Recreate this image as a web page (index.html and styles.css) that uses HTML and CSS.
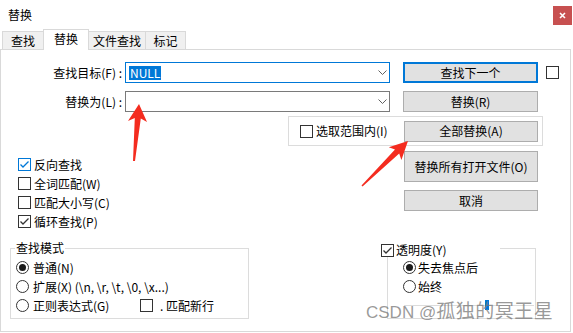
FILE: index.html
```html
<!DOCTYPE html>
<html>
<head>
<meta charset="utf-8">
<title>替换</title>
<link rel="stylesheet" href="styles.css">
</head>
<body>
	<div class="titlebar">
		<span class="title">替换</span>
		<span class="close"><svg width="7" height="7" viewBox="0 0 7 7"><path d="M1 1 L6 6 M6 1 L1 6" stroke="#fff" stroke-width="1.6"/></svg></span>
	</div>

	<div class="tabs">
		<span class="tab t1">查找</span>
		<span class="tab active">替换</span>
		<span class="tab t3">文件查找</span>
		<span class="tab t4">标记</span>
	</div>

	<div class="panel">
		<div class="row row-find">
			<span class="label">查找目标(F) :</span>
			<div class="combo focus"><span class="sel">NULL</span><svg class="chev" width="9" height="5" viewBox="0 0 9 5"><path d="M0.5 0.5 L4.5 4.5 L8.5 0.5" fill="none" stroke="#606060"/></svg></div>
			<div class="btn default">查找下一个</div>
			<span class="box"></span>
		</div>

		<div class="row row-replace">
			<span class="label">替换为(L) :</span>
			<div class="combo"><span></span><svg class="chev" width="9" height="5" viewBox="0 0 9 5"><path d="M0.5 0.5 L4.5 4.5 L8.5 0.5" fill="none" stroke="#606060"/></svg></div>
			<div class="btn">替换(R)</div>
		</div>

		<div class="scope">
			<span class="box"></span><span class="scope-label">选取范围内(I)</span>
			<div class="btn">全部替换(A)</div>
		</div>

		<div class="middle">
			<div class="checks">
				<div class="check"><span class="box blue"><svg width="11" height="11" viewBox="0 0 11 11"><path d="M1.5 5.5 L4 8 L9.5 2.5" fill="none" stroke="currentColor" stroke-width="1.3"/></svg></span>反向查找</div>
				<div class="check"><span class="box"></span>全词匹配(W)</div>
				<div class="check"><span class="box"></span>匹配大小写(C)</div>
				<div class="check"><span class="box"><svg width="11" height="11" viewBox="0 0 11 11"><path d="M1.5 5.5 L4 8 L9.5 2.5" fill="none" stroke="currentColor" stroke-width="1.3"/></svg></span>循环查找(P)</div>
			</div>
			<div class="buttons">
				<div class="btn tall">替换所有打开文件(O)</div>
				<div class="btn">取消</div>
			</div>
		</div>

		<div class="bottom">
			<div class="group mode">
				<div class="legend">查找模式</div>
				<div class="opt"><span class="radio on"></span>普通(N)</div>
				<div class="opt"><span class="radio"></span>扩展(X) (\n, \r, \t, \0, \x...)</div>
				<div class="opt"><span class="radio"></span><span class="re">正则表达式(G)</span><span class="box"></span><span class="nl">. 匹配新行</span></div>
			</div>
			<div class="group trans">
				<div class="legend"><span class="box"><svg width="11" height="11" viewBox="0 0 11 11"><path d="M1.5 5.5 L4 8 L9.5 2.5" fill="none" stroke="currentColor" stroke-width="1.3"/></svg></span>透明度(Y)</div>
				<div class="opt"><span class="radio on"></span>失去焦点后</div>
				<div class="opt"><span class="radio"></span>始终</div>
				<div class="slider"><span class="thumb"></span></div>
			</div>
		</div>
	</div>

	<div class="watermark">CSDN @<span class="wm-cjk">孤独的冥王星</span></div>

	<!-- red callout arrows drawn over the dialog -->
	<svg class="arrows" width="573" height="333" viewBox="0 0 573 333">
		<polygon points="139,104 147,122 140.8,118.5 135,161 133,161 134.8,118 128,121" fill="#f42c1f"/>
		<polygon points="408,141 388.8,147.2 395,149.4 361.5,185.5 362.5,186.5 399.2,153.6 401.4,160" fill="#f42c1f"/>
	</svg>
</body>
</html>
```

FILE: styles.css
```css
* {
	box-sizing: border-box;
}
html, body {
	margin: 0;
}
body {
	position: relative;
	width: 573px;
	height: 333px;
	overflow: hidden;
	background: #fff;
	color: #000;
	font: 12px/14px "Noto Sans CJK SC", "Liberation Sans", sans-serif;
}

.titlebar {
	display: flex;
	justify-content: space-between;
	height: 29px;
}
.title {
	padding: 7px 0 0 8px;
	line-height: 15px;
}
.close {
	display: flex;
	align-items: center;
	justify-content: center;
	width: 19px;
	height: 19px;
	margin: 6px 1px 0 0;
	background: #c75050;
}

.tabs {
	display: flex;
	align-items: flex-end;
	height: 20px;
	padding-left: 2px;
}
.tab {
	height: 18px;
	line-height: 17px;
	text-align: center;
	background: #f0f0f0;
	border: 1px solid #d9d9d9;
	border-bottom: 0;
}
.tab + .tab {
	margin-left: -1px;
}
.t1 { width: 42px; }
.t3 { width: 58px; }
.t4 { width: 41px; }
.tab.active {
	position: relative;
	z-index: 1;
	width: 46px;
	height: 21px;
	margin-bottom: -1px;
	line-height: 18px;
	background: #fff;
}

.panel {
	width: 571px;
	height: 283px;
	border: 1px solid #d9d9d9;
}

.row {
	display: flex;
	align-items: center;
	height: 21px;
}
.row-find {
	margin-top: 12px;
}
.row-replace {
	margin-top: 8px;
}
.label {
	width: 121px;
	text-align: right;
}
.combo {
	display: flex;
	align-items: center;
	justify-content: space-between;
	width: 265px;
	height: 21px;
	margin-left: 3px;
	padding: 0 2px 0 3px;
	background: #fff;
	border: 1px solid #7a7a7a;
}
.combo.focus {
	border-color: #0078d7;
}
.sel {
	padding: 0 1px;
	line-height: 14px;
	color: #fff;
	background: #0078d7;
}

.btn {
	display: flex;
	align-items: center;
	justify-content: center;
	width: 135px;
	height: 21px;
	background: #e1e1e1;
	border: 1px solid #adadad;
}
.row .btn {
	margin-left: 13px;
}
.btn.default {
	border: 2px solid #0078d7;
}
.row .box {
	margin-left: 8px;
}

.box {
	display: inline-flex;
	align-items: center;
	justify-content: center;
	flex: none;
	width: 13px;
	height: 13px;
	background: #fff;
	border: 1px solid #333;
	color: #333;
}
.box.blue {
	border-color: #0078d7;
	color: #0078d7;
}
.radio {
	display: inline-flex;
	align-items: center;
	justify-content: center;
	flex: none;
	width: 13px;
	height: 13px;
	border: 1px solid #333;
	border-radius: 50%;
	background: #fff;
}
.radio.on::after {
	content: "";
	width: 7px;
	height: 7px;
	border-radius: 50%;
	background: #1a1a1a;
}

.scope {
	display: flex;
	align-items: center;
	width: 255px;
	height: 30px;
	margin: 4px 0 0 287px;
	padding-left: 11px;
	border: 1px solid #dcdcdc;
}
.scope-label {
	margin-left: 3px;
}
.scope .btn {
	width: 134px;
	margin-left: auto;
	margin-right: 4px;
}

.middle {
	display: flex;
	justify-content: space-between;
	margin-top: 5px;
}
.checks {
	margin-left: 17px;
	padding-top: 4px;
}
.check {
	display: flex;
	align-items: center;
	gap: 3px;
	height: 19px;
}
.buttons {
	display: flex;
	flex-direction: column;
	gap: 8px;
	margin-right: 32px;
}
.buttons .btn {
	width: 134px;
}
.btn.tall {
	height: 31px;
}

.bottom {
	display: flex;
	align-items: flex-start;
	margin-top: 17px;
}
.group {
	height: 71px;
	border: 1px solid #dcdcdc;
}
.legend {
	width: max-content;
	margin: -8px 0 0 2px;
	padding: 0 1px;
	line-height: 14px;
	background: #fff;
}
.mode {
	width: 239px;
	margin-left: 9px;
	padding: 0 0 0 2px;
}
.mode .legend {
	margin-bottom: 3px;
}
.opt {
	display: flex;
	align-items: center;
	gap: 4px;
	height: 19px;
}
.mode .opt {
	margin-left: 3px;
}
.re {
	width: 103px;
}
.nl {
	margin-left: 3px;
}
.trans {
	width: 149px;
	margin-left: 138px;
}
.trans .legend {
	display: flex;
	align-items: center;
	gap: 2px;
	width: 119px;
	margin: -6px 0 1px -7px;
	padding: 0;
}
.trans .opt {
	margin-left: 15px;
	gap: 2px;
}
.slider {
	display: flex;
	width: 130px;
	height: 10px;
	margin: 4px 0 0 16px;
	background: linear-gradient(#dcdcdc, #dcdcdc) center / 100% 1px no-repeat;
}
.thumb {
	width: 4px;
	height: 10px;
	margin-left: 81px;
	background: #0078d7;
}

.watermark {
	position: absolute;
	left: 366px;
	top: 303px;
	font: 17px/17px "Liberation Sans", "Noto Sans CJK SC", sans-serif;
	color: rgba(120, 120, 120, 0.75);
	white-space: nowrap;
}
.wm-cjk {
	font-size: 19px;
	letter-spacing: 0.5px;
}
.arrows {
	position: absolute;
	left: 0;
	top: 0;
	pointer-events: none;
}
```
